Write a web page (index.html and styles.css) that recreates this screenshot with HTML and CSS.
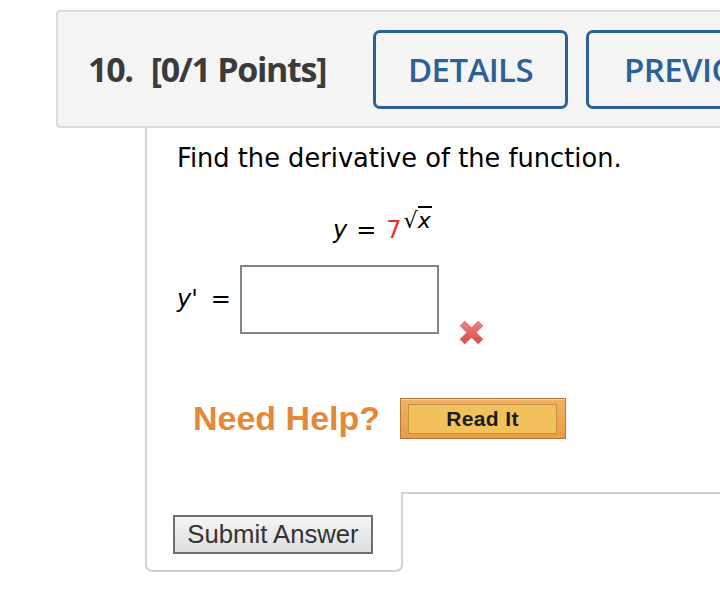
FILE: index.html
```html
<!DOCTYPE html>
<html lang="en">
<head>
<meta charset="utf-8">
<title>Question 10</title>
<link rel="stylesheet" href="styles.css">
</head>
<body>
<div class="page">
  <div class="header">
    <div class="qnum"><span class="num">10.</span><span>[0/1 Points]</span></div>
    <button class="hbtn">DETAILS</button>
    <button class="hbtn">PREVIOUS ANSWERS</button>
  </div>
  <div class="card">
    <div class="content">
      <p class="prompt">Find the derivative of the function.</p>
      <div class="equation"><span class="var">y</span><span class="eq">=</span><span class="seven">7</span><span class="sup">√<span class="rad var">x</span></span></div>
      <div class="answer-row">
        <div class="lhs"><span class="var">y'</span><span class="eq2">=</span></div>
        <div class="answer-input"></div>
        <svg class="xmark" width="27" height="27" viewBox="0 0 26 26" aria-label="incorrect">
          <defs>
            <linearGradient id="xg" x1="0" y1="0" x2="0" y2="1">
              <stop offset="0" stop-color="#f28282"/>
              <stop offset="1" stop-color="#d94c4c"/>
            </linearGradient>
          </defs>
          <path fill="url(#xg)" stroke="#d65656" stroke-width="0.6" d="M2 6.5 L6.5 2 L13 8.5 L19.5 2 L24 6.5 L17.5 13 L24 19.5 L19.5 24 L13 17.5 L6.5 24 L2 19.5 L8.5 13 Z"/>
        </svg>
      </div>
      <div class="help-row">
        <span class="need-help">Need Help?</span>
        <button class="read-it"><span class="read-inner">Read It</span></button>
      </div>
    </div>
    <div class="foot">
      <div class="submit-cell"><button class="submit">Submit Answer</button></div>
      <div class="foot-tail"></div>
    </div>
  </div>
</div>
</body>
</html>
```
FILE: styles.css
```css
html, body {
  margin: 0;
  padding: 0;
  background: #ffffff;
  overflow: hidden;
}

.page {
  width: 720px;
  height: 598px;
  overflow: hidden;
}

.header {
  margin: 10px 0 0 56px;
  width: 900px;
  height: 114px;
  border: 2px solid #dcdcdc;
  border-right: none;
  border-radius: 4px 0 0 4px;
  background: #f5f5f5;
  display: flex;
  align-items: center;
  padding-left: 30px;
  white-space: nowrap;
}

.qnum {
  width: 285px;
  flex-shrink: 0;
  font-family: "Open Sans", sans-serif;
  font-weight: 700;
  font-size: 34px;
  color: #3b3b3b;
  letter-spacing: -1.3px;
}

.num {
  margin-right: 18px;
}

.hbtn {
  flex-shrink: 0;
  width: 195px;
  height: 79px;
  box-sizing: border-box;
  border: 3px solid #2b6198;
  border-radius: 7px;
  background: transparent;
  color: #2b6198;
  font-family: "Open Sans", sans-serif;
  font-weight: 600;
  font-size: 33px;
  letter-spacing: -0.6px;
  padding: 0;
  text-align: center;
}

.hbtn + .hbtn {
  margin-left: 18px;
  width: 400px;
  text-align: left;
  padding-left: 35px;
}

.card {
  margin-left: 145px;
  width: 700px;
}

.content {
  border-left: 2px solid #d2d2d2;
  padding: 15px 0 53px 30px;
}

.prompt {
  margin: 0;
  font-family: "DejaVu Sans", sans-serif;
  font-size: 25.7px;
  line-height: 30px;
  color: #000;
}

.equation {
  margin-top: 37px;
  padding-left: 156px;
  height: 30px;
  font-family: "DejaVu Sans", sans-serif;
  font-size: 24px;
  line-height: 30px;
  color: #000;
  white-space: nowrap;
}

.var {
  font-style: italic;
}

.eq {
  margin: 0 10px 0 9px;
}

.eq2 {
  margin-left: 13px;
}

.seven {
  color: #e8321f;
}

.sup {
  font-size: 22px;
  line-height: 1;
  vertical-align: 10px;
  margin-left: 2px;
}

.rad {
  border-top: 2px solid #000;
  padding: 0 1px 0 0;
}

.answer-row {
  display: flex;
  align-items: flex-start;
  margin-top: 25px;
}

.lhs {
  width: 63px;
  height: 69px;
  line-height: 69px;
  font-family: "DejaVu Sans", sans-serif;
  font-size: 24px;
  color: #000;
  white-space: nowrap;
}

.answer-input {
  width: 199px;
  height: 69px;
  box-sizing: border-box;
  border: 2px solid #858585;
  background: #fff;
}

.xmark {
  display: block;
  margin: 54px 0 0 19px;
}

.help-row {
  display: flex;
  align-items: flex-start;
  margin-top: 52px;
  padding-left: 16px;
}

.need-help {
  font-family: "Liberation Sans", Arial, sans-serif;
  font-weight: 700;
  font-size: 34px;
  line-height: 41px;
  color: #e5883a;
  margin-right: 20px;
  white-space: nowrap;
}

.read-it {
  width: 166px;
  height: 41px;
  box-sizing: border-box;
  border: 1px solid #b27a3a;
  background: linear-gradient(#f3b162, #eb9c45);
  box-shadow: inset 0 1px 0 #f8d2a0;
  padding: 5px 8px 4px 7px;
  display: flex;
}

.read-inner {
  flex: 1;
  display: block;
  border: 1px solid #c2904a;
  background: #f3c15c;
  font-family: "Liberation Sans", Arial, sans-serif;
  font-weight: 700;
  font-size: 21px;
  letter-spacing: 0.4px;
  line-height: 28px;
  color: #1b1b1b;
  text-align: center;
}

.foot {
  display: flex;
}

.submit-cell {
  width: 258px;
  height: 80px;
  box-sizing: border-box;
  border: 2px solid #d2d2d2;
  border-top: none;
  border-radius: 0 0 7px 7px;
  padding: 23px 0 0 26px;
  flex-shrink: 0;
}

.foot-tail {
  flex: 1;
  border-top: 2px solid #d2d2d2;
}

.submit {
  width: 200px;
  height: 39px;
  box-sizing: border-box;
  border: 2px solid #6e6e6e;
  background: linear-gradient(#f5f5f5, #dedede);
  font-family: "Liberation Sans", Arial, sans-serif;
  font-size: 25.7px;
  color: #333;
  padding: 0;
  line-height: 35px;
}
```
